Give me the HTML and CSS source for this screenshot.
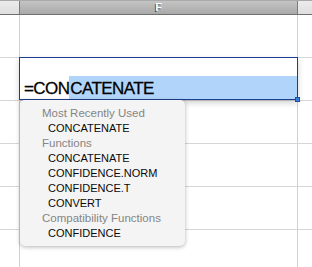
FILE: index.html
```html
<!DOCTYPE html>
<html>
<head>
<meta charset="utf-8">
<link rel="stylesheet" href="styles.css">
</head>
<body>
<div class="sheet">
  <div class="row hrow">
    <div class="c-a hc"></div>
    <div class="c-f hc hc-f"><span class="hlabel">F</span></div>
    <div class="c-g hc"></div>
  </div>
  <div class="row"><div class="c-a"></div><div class="c-f"></div><div class="c-g"></div></div>
  <div class="row">
    <div class="c-a"></div>
    <div class="c-f cell-edit">
      <div class="editor">
        <div class="line"><span class="typed">=CON</span><span class="sel">CATENATE</span></div>
        <div class="handle"></div>
        <div class="menu">
          <div class="mh">Most Recently Used</div>
          <div class="mi">CONCATENATE</div>
          <div class="mh">Functions</div>
          <div class="mi">CONCATENATE</div>
          <div class="mi">CONFIDENCE.NORM</div>
          <div class="mi">CONFIDENCE.T</div>
          <div class="mi">CONVERT</div>
          <div class="mh">Compatibility Functions</div>
          <div class="mi">CONFIDENCE</div>
        </div>
      </div>
    </div>
    <div class="c-g"></div>
  </div>
  <div class="row"><div class="c-a"></div><div class="c-f"></div><div class="c-g"></div></div>
  <div class="row"><div class="c-a"></div><div class="c-f"></div><div class="c-g"></div></div>
  <div class="row"><div class="c-a"></div><div class="c-f"></div><div class="c-g"></div></div>
  <div class="row"><div class="c-a"></div><div class="c-f"></div><div class="c-g"></div></div>
</div>
</body>
</html>
```
FILE: styles.css
```css
html, body {
  margin: 0;
  padding: 0;
  background: #ffffff;
  font-family: "Liberation Sans", Arial, sans-serif;
  overflow: hidden;
}
.sheet {
  display: flex;
  flex-direction: column;
  width: 312px;
}
.row {
  display: flex;
  height: 43px;
  box-sizing: border-box;
  border-bottom: 1px solid #d6d6d6;
}
.c-a {
  width: 20px;
  box-sizing: border-box;
  border-right: 1px solid #d0d0d0;
}
.c-f {
  width: 278px;
  box-sizing: border-box;
  border-right: 1px solid #d0d0d0;
}
.c-g {
  flex: 1;
}
.hrow {
  height: 15px;
  border-top: 1px solid #a9a9a9;
  border-bottom: 1px solid #6f6f6f;
}
.hc {
  background: linear-gradient(#ececec, #dedede);
}
.hrow .c-a,
.hrow .c-f {
  border-right: 1px solid #7c7c7c;
}
.hc-f {
  background: linear-gradient(#c4c4c4, #a9a9a9);
  display: flex;
  justify-content: center;
  align-items: center;
}
.hlabel {
  color: #ffffff;
  font-weight: bold;
  font-size: 11px;
  line-height: 13px;
  text-shadow: -1px 1px 0 rgba(40, 40, 40, 0.75);
}
.cell-edit {
  position: relative;
}
.editor {
  position: absolute;
  top: -1px;
  left: -1px;
  width: 279px;
  height: 43px;
  box-sizing: border-box;
  border: 1px solid #1c3f8e;
  background: #ffffff;
  box-shadow: 0 3px 6px rgba(0, 0, 0, 0.18);
  display: flex;
  flex-direction: column;
  justify-content: flex-end;
  z-index: 2;
}
.line {
  display: flex;
  font-size: 17px;
  letter-spacing: -0.6px;
  color: #000000;
  -webkit-text-stroke: 0.3px #000000;
}
.typed {
  padding: 3px 0 0 4px;
  line-height: 20px;
}
.sel {
  flex: 1;
  background: #b1d5fa;
  padding-top: 3px;
  padding-left: 1px;
  line-height: 20px;
}
.handle {
  position: absolute;
  right: -3px;
  bottom: -3px;
  width: 5px;
  height: 5px;
  box-sizing: border-box;
  background: #3b7fd8;
  border: 1px solid #1b4fa3;
}
.menu {
  position: absolute;
  left: 0;
  top: 42px;
  width: 165px;
  height: 146px;
  box-sizing: border-box;
  padding-top: 6px;
  background: #f4f4f4;
  border-radius: 5px;
  box-shadow: 0 1px 4px rgba(0, 0, 0, 0.3);
  display: flex;
  flex-direction: column;
}
.mh {
  padding-left: 22px;
  font-size: 11.5px;
  line-height: 15px;
  color: #858585;
}
.mi {
  padding-left: 28px;
  font-size: 11px;
  line-height: 15px;
  color: #0a0a0a;
}
```
